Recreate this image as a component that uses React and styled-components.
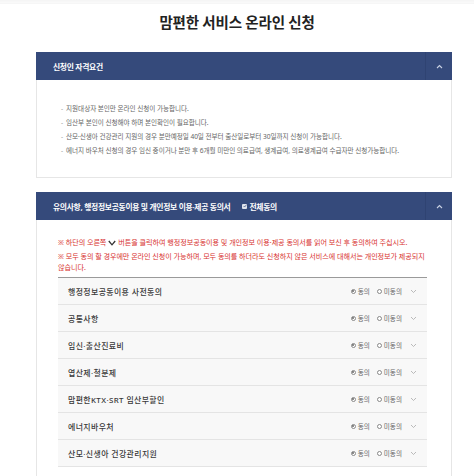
import React from 'react'
import styled, {createGlobalStyle} from 'styled-components'

const Global = createGlobalStyle`
  html, body { margin: 0; padding: 0; background: #fff; }
  body { font-family: "Noto Sans", "Noto Sans CJK KR", sans-serif; color: #333; }
  * { box-sizing: border-box; }
`

const TopLine = styled.div`
  height: 4px;
  background: linear-gradient(#f4f4f4, #fafafa);
  border-bottom: 1px solid #f6f6f6;
`

const Page = styled.div`
  width: 474px;
`

const Title = styled.h1`
  margin: 8px 0 0;
  height: 40px;
  font-size: 14.5px;
  line-height: 20px;
  font-weight: 700;
  text-align: center;
  color: #222;
  letter-spacing: -0.2px;
`

const Panel = styled.section`
  margin: 0 22px ${p => p.$gap || 0}px 36px;
  width: 416px;
`

const Head = styled.div`
  display: flex;
  align-items: stretch;
  height: 28px;
  background: #354a7b;
  color: #fff;
`

const HeadTitle = styled.div`
  flex: 1;
  display: flex;
  align-items: center;
  gap: 12px;
  padding-left: 17px;
  font-size: 7.8px;
  font-weight: 700;
  letter-spacing: -0.3px;
`

const AllAgree = styled.label`
  display: flex;
  align-items: center;
  gap: 2px;
`

const Check = styled.span`
  width: 5px;
  height: 5px;
  background: #dfe3ec;
  border-radius: 1px;
  display: flex;
  align-items: center;
  justify-content: center;
`

const Toggle = styled.div`
  width: 27px;
  border-left: 1px solid #2f4372;
  display: flex;
  align-items: center;
  justify-content: center;
`

const Body = styled.div`
  border: 1px solid #e6e6e6;
  border-top: none;
  padding: ${p => p.$pad};
`

const Bullets = styled.ul`
  margin: 0;
  padding: 0;
  list-style: none;
`

const Bullet = styled.li`
  font-size: 6.6px;
  line-height: 14px;
  color: #666;
  letter-spacing: -0.05px;
  &::before {
    content: '-';
    margin-right: 3px;
    color: #999;
  }
`

const Notice = styled.p`
  margin: 0 0 ${p => p.$after || 0}px;
  font-size: 7.1px;
  line-height: 11px;
  color: #d8322f;
  letter-spacing: -0.05px;
`

const Arrow = styled.svg`
  vertical-align: -1px;
  margin: 0 2px;
`

const List = styled.ul`
  margin: 4px 0 0;
  padding: 0;
  list-style: none;
  border-top: 1px solid #9a9a9a;
`

const Row = styled.li`
  height: 27px;
  display: flex;
  align-items: center;
  padding: 0 10px;
  background: #f8f8f8;
  border-bottom: 1px solid #e4e4e4;
`

const RowName = styled.span`
  flex: 1;
  font-size: 7.9px;
  font-weight: 500;
  color: #383838;
  letter-spacing: 0.4px;
`

const Choice = styled.span`
  display: flex;
  align-items: center;
  gap: 2px;
  margin-left: 7px;
  font-size: 6.6px;
  color: #666;
`

const Radio = styled.span`
  width: 5px;
  height: 5px;
  border-radius: 50%;
  border: 0.7px solid #888;
  display: flex;
  align-items: center;
  justify-content: center;
  background: #fff;
  &::after {
    content: '';
    width: 2.4px;
    height: 2.4px;
    border-radius: 50%;
    background: ${p => (p.$on ? '#666' : 'transparent')};
  }
`

const Expand = styled.svg`
  margin-left: 8px;
`

const Up = () => (
  <svg width="7" height="5" viewBox="0 0 7 5">
    <path d="M1 4 L3.5 1.5 L6 4" fill="none" stroke="#c9d1e3" strokeWidth="1.1" />
  </svg>
)

const items = [
  '행정정보공동이용 사전동의',
  '공통사항',
  '임신·출산진료비',
  '엽산제·철분제',
  '맘편한KTX·SRT 임산부할인',
  '에너지바우처',
  '산모·신생아 건강관리지원',
]

const rules = [
  '지원대상자 본인만 온라인 신청이 가능합니다.',
  '임산부 본인이 신청해야 하며 본인확인이 필요합니다.',
  '산모·신생아 건강관리 지원의 경우 분만예정일 40일 전부터 출산일로부터 30일까지 신청이 가능합니다.',
  '에너지 바우처 신청의 경우 임신 중이거나 분만 후 6개월 미만인 의료급여, 생계급여, 의료생계급여 수급자만 신청가능합니다.',
]

export default function App() {
  return (
    <Page>
      <Global />
      <TopLine />
      <Title>맘편한 서비스 온라인 신청</Title>

      <Panel $gap={14}>
        <Head>
          <HeadTitle>신청인 자격요건</HeadTitle>
          <Toggle><Up /></Toggle>
        </Head>
        <Body $pad="22px 24px 19px 24px">
          <Bullets>
            {rules.map(r => <Bullet key={r}>{r}</Bullet>)}
          </Bullets>
        </Body>
      </Panel>

      <Panel>
        <Head>
          <HeadTitle>
            유의사항, 행정정보공동이용 및 개인정보 이용·제공 동의서
            <AllAgree>
              <Check>
                <svg width="4" height="4" viewBox="0 0 4 4">
                  <path d="M0.6 2 L1.6 3 L3.4 0.9" fill="none" stroke="#354a7b" strokeWidth="0.7" />
                </svg>
              </Check>
              전체동의
            </AllAgree>
          </HeadTitle>
          <Toggle><Up /></Toggle>
        </Head>
        <Body $pad="17px 24px 20px 21px">
          <Notice $after={3}>
            ※ 하단의 오른쪽
            <Arrow width="8" height="6" viewBox="0 0 8 6">
              <path d="M0.8 1 L4 4.8 L7.2 1" fill="none" stroke="#333" strokeWidth="1.3" />
            </Arrow>
            버튼을 클릭하여 행정정보공동이용 및 개인정보 이용·제공 동의서를 읽어 보신 후 동의하여 주십시오.
          </Notice>
          <Notice>
            ※ 모두 동의 할 경우에만 온라인 신청이 가능하며, 모두 동의를 하더라도 신청하지 않은 서비스에 대해서는 개인정보가 제공되지 않습니다.
          </Notice>
          <List>
            {items.map(name => (
              <Row key={name}>
                <RowName>{name}</RowName>
                <Choice><Radio $on />동의</Choice>
                <Choice><Radio />미동의</Choice>
                <Expand width="7" height="5" viewBox="0 0 7 5">
                  <path d="M1 1 L3.5 3.5 L6 1" fill="none" stroke="#aaa" strokeWidth="0.8" />
                </Expand>
              </Row>
            ))}
          </List>
        </Body>
      </Panel>
    </Page>
  )
}
